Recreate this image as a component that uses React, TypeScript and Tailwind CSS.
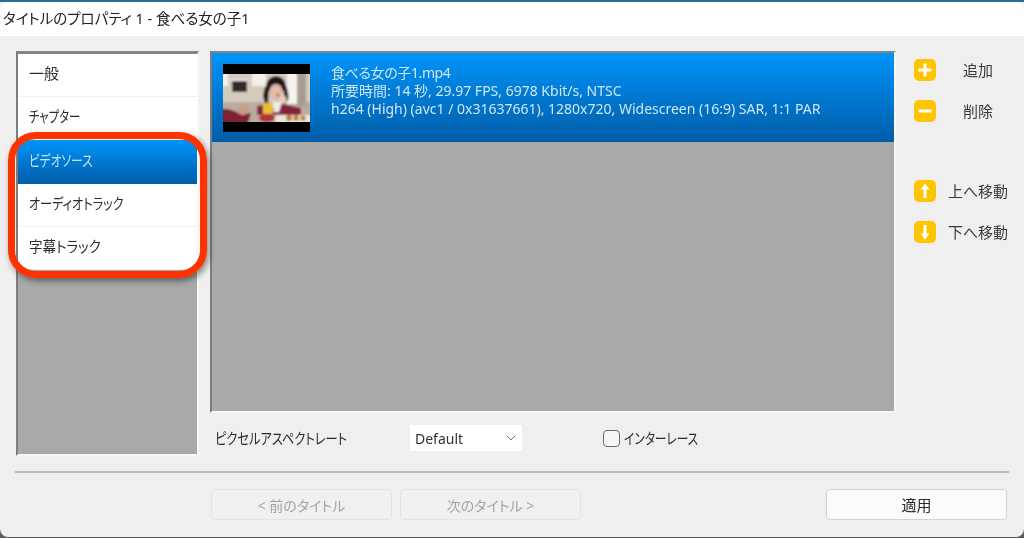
import { ChevronDown } from "lucide-react";
import type { ReactNode } from "react";

const sans = "font-['Noto_Sans','Noto_Sans_CJK_JP',sans-serif]";

// the original UI font has condensed kana, so each label is narrowed to its real width
const tabs = [
  { label: "一般", fit: "scale-x-100" },
  { label: "チャプター", fit: "scale-x-[0.76]" },
  { label: "ビデオソース", fit: "scale-x-[0.78]" },
  { label: "オーディオトラック", fit: "scale-x-[0.81]" },
  { label: "字幕トラック", fit: "scale-x-[0.9]" },
];

function Thumbnail() {
  return (
    <svg width="87" height="68" viewBox="0 0 87 68" className="shrink-0">
      <defs>
        <filter id="soft">
          <feGaussianBlur stdDeviation="1.1" />
        </filter>
      </defs>
      <rect width="87" height="68" fill="#000" />
      <svg x="0" y="10" width="87" height="48" viewBox="0 0 87 48">
        <g filter="url(#soft)">
          <rect x="-4" y="-4" width="95" height="56" fill="#d6cabf" />
          <rect x="-4" y="28" width="95" height="24" fill="#b9aca0" />
          <rect x="29" y="-4" width="14" height="16" fill="#f3f0ea" />
          <rect x="64" y="-4" width="10" height="34" fill="#f6f4ef" />
          <rect x="74" y="-4" width="9" height="36" fill="#a89c90" />
          <rect x="-4" y="-4" width="9" height="16" fill="#f4f2ec" />
          <rect x="9" y="7" width="15" height="11" fill="#35292a" />
          <rect x="7" y="5" width="19" height="2" fill="#eee8df" />
          {/* girl */}
          <path d="M34 32 L46 30 L60 30 L78 34 L78 41 L34 41 Z" fill="#84243a" />
          <path d="M49 28 L59 28 L56 38 L51 38 Z" fill="#f1ece6" />
          <ellipse cx="53" cy="11" rx="9.5" ry="9" fill="#1d1517" />
          <ellipse cx="53" cy="18" rx="6.5" ry="8" fill="#e3bba8" />
          <path d="M45 9 C40 14 39 23 42 29 L45 29 L46 12 Z" fill="#1d1517" />
          <path d="M61 9 C65 14 66 21 65 27 L62 27 L60 12 Z" fill="#1d1517" />
          <circle cx="60" cy="25" r="3.5" fill="#e9cbb9" />
          <circle cx="55" cy="21" r="1.6" fill="#b8672f" />
          {/* table */}
          <rect x="40" y="29" width="10" height="11" fill="#e6bd35" />
          <path d="M-4 35 C8 34 13 38 17 40 L28 39 L24 52 L-4 52 Z" fill="#7e2231" />
          <ellipse cx="20" cy="36" rx="6" ry="5" fill="#c99c8a" />
          <ellipse cx="44" cy="44" rx="8" ry="4" fill="#b2323c" />
          <rect x="52" y="41" width="37" height="10" rx="3" fill="#ece6da" />
          <circle cx="66" cy="44" r="3" fill="#bb7a33" />
          <circle cx="73" cy="44" r="3" fill="#c58438" />
          <circle cx="80" cy="44" r="2.6" fill="#bb7a33" />
        </g>
      </svg>
    </svg>
  );
}

function GlyphIcon({ d }: { d: string }) {
  return (
    <svg width="22" height="22" viewBox="0 0 22 22" className="rounded-[5px] bg-[#ffc400]">
      <path d={d} fill="#fff" />
    </svg>
  );
}

function SideButton({ icon, label, className }: { icon: ReactNode; label: string; className?: string }) {
  return (
    <div className={`flex h-[22px] items-center ${className ?? ""}`}>
      {icon}
      <span className="ml-[1px] w-[82px] text-center text-[15px] text-[#3a3a3a]">{label}</span>
    </div>
  );
}

export default function App() {
  return (
    <div className={`h-[538px] w-[1024px] overflow-hidden bg-[#5c5c5c] blur-[0.3px] [font-feature-settings:'palt'] ${sans}`}>
      <div className="relative flex h-[537px] flex-col overflow-hidden rounded-b-[8px] border-t-2 border-[#2f6a94] bg-[#efefef]">
        <div className="flex h-[34px] items-center rounded-t-[8px] bg-white pl-[3px] text-[14.5px] text-[#222]">
          タイトルのプロパティ 1 - 食べる女の子1
        </div>

        <div className="flex flex-1 pl-[16px] pr-[16px] pt-[15px]">
          {/* Left tabs */}
          <div className="h-[405px] w-[183px] shrink-0 border-2 border-t-[3px] border-[#f8f8f8] border-l-[#7d7d7d] border-t-[#858585] bg-[#a9a9a9]">
            {tabs.map((t, i) =>
              i === 2 ? (
                <div
                  key={t.label}
                  className="flex h-[44px] items-center bg-gradient-to-b from-[#0094fa] to-[#005da8] pb-[4px] pl-[11px] text-[15px] text-[#c5e2f7]"
                >
                  <span className={`origin-left whitespace-nowrap ${t.fit}`}>{t.label}</span>
                </div>
              ) : (
                <div
                  key={t.label}
                  className="flex h-[43px] items-center border-b border-[#f0f0f0] bg-white pb-[4px] pl-[11px] text-[15px] text-[#2b2b2b]"
                >
                  <span className={`origin-left whitespace-nowrap ${t.fit}`}>{t.label}</span>
                </div>
              ),
            )}
          </div>

          {/* Source list and its options */}
          <div className="ml-[11px] flex w-[686px] shrink-0 flex-col">
            <div className="h-[362px] border-2 border-[#f8f8f8] border-l-[#7d7d7d] border-t-[#858585] bg-[#a9a9a9]">
              <div className="flex h-[89px] items-start bg-gradient-to-b from-[#0094fa] to-[#005da8] pl-[11px] pt-[11px]">
                <Thumbnail />
                <div className="ml-[21px] text-[14px] leading-[18px] text-[#cfe6f8]">
                  <p className="tracking-[-0.4px]">食べる女の子1.mp4</p>
                  <p>所要時間: 14 秒, 29.97 FPS, 6978 Kbit/s, NTSC</p>
                  <p>h264 (High) (avc1 / 0x31637661), 1280x720, Widescreen (16:9) SAR, 1:1 PAR</p>
                </div>
              </div>
            </div>
            <div className="mt-[12px] flex h-[26px] items-center text-[15px] text-[#2b2b2b]">
              <span className="ml-[5px] w-[195px] origin-left scale-x-[0.815] whitespace-nowrap">
                ピクセルアスペクトレート
              </span>
              <div className="flex h-[26px] w-[112px] items-center justify-between bg-white pl-[5px] pr-[3px] text-[14px] text-[#333]">
                Default
                <ChevronDown size={16} strokeWidth={1.2} className="text-[#555]" />
              </div>
              <span className="ml-[81px] h-[17px] w-[17px] rounded-[4px] border border-[#6b6b6b] bg-[#f6f6f6]" />
              <span className="ml-[4px] origin-left scale-x-[0.78] whitespace-nowrap">インターレース</span>
            </div>
          </div>

          {/* Right actions */}
          <div className="ml-[18px] flex flex-col pt-[8px]">
            <SideButton icon={<GlyphIcon d="M9.5 4.5h3v5h5v3h-5v5h-3v-5h-5v-3h5z" />} label="追加" />
            <SideButton icon={<GlyphIcon d="M4.5 9.5h13v3h-13z" />} label="削除" className="mt-[19px]" />
            <SideButton icon={<GlyphIcon d="M11 3.5l4.5 6h-3v8.5h-3v-8.5h-3z" />} label="上へ移動" className="mt-[58px]" />
            <SideButton icon={<GlyphIcon d="M11 18.5l4.5-6h-3v-8.5h-3v8.5h-3z" />} label="下へ移動" className="mt-[19px]" />
          </div>
        </div>

        <div className="mx-[15px] h-[2px] bg-[#bdbdbd]" />

        <div className="flex h-[64px] shrink-0 pl-[211px] pt-[16px] text-[14px]">
          <button className="h-[31px] w-[181px] rounded-[4px] border border-[#e3e3e3] bg-[#f0f0f0] pt-[1px] text-[#a4a4a4]">
            &lt; 前のタイトル
          </button>
          <button className="ml-[8px] h-[31px] w-[181px] rounded-[4px] border border-[#e3e3e3] bg-[#f0f0f0] pt-[1px] text-[#a4a4a4]">
            次のタイトル &gt;
          </button>
          <button className="ml-[245px] h-[31px] w-[181px] rounded-[4px] border border-[#d2d2d2] bg-[#fbfbfb] pt-[1px] text-[15px] text-[#2b2b2b]">
            適用
          </button>
        </div>

        {/* Red annotation drawn over the screenshot */}
        <div className="absolute left-[8px] top-[130px] h-[146px] w-[199px] rounded-[28px] border-[7px] border-[#ff3300] shadow-[2px_3px_6px_rgba(0,0,0,0.45)]" />
      </div>
    </div>
  );
}
